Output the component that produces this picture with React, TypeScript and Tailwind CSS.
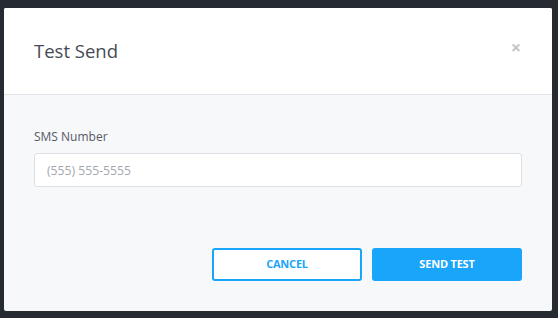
import { useState } from 'react';

export default function App() {
    const [numero, setNumero] = useState('');

    return (
        <div className="h-[318px] w-[558px] bg-[#262a31] pt-2 pl-1 font-['Open_Sans',sans-serif]">
            <div className="w-[548px] h-[303px] flex flex-col overflow-hidden rounded-[2px] bg-[#f7f8fa]">
                {/* Cabecera */}
                <div className="h-[87px] shrink-0 flex items-center justify-between bg-white border-b border-[#e2e3e8] pl-[30px] pr-[30px]">
                    <h2 className="text-[18.5px] leading-none text-[#464b55]">Test Send</h2>
                    <button className="text-[#c4c6ca] text-[18px] leading-none font-bold -mt-[8px] mr-[1px]">×</button>
                </div>

                {/* Cuerpo */}
                <div className="flex-1 flex flex-col px-[30px] pt-[33px] pb-[30px]">
                    <label className="block text-[12px] leading-[18px] text-[#555a64] mb-[7px]">SMS Number</label>
                    <input
                        className="h-[34px] w-full rounded-[3px] border border-[#dfe0e5] bg-white px-[12px] text-[12.2px] text-[#555a64] placeholder:text-[#a3a7ae] outline-none"
                        placeholder="(555) 555-5555"
                        value={numero}
                        onChange={e => setNumero(e.target.value)}
                    />
                    <div className="mt-auto flex justify-end gap-[10px]">
                        <button className="w-[150px] h-[33px] rounded-[3px] border-2 border-[#19a5f9] bg-white text-[11px] font-bold tracking-[-0.2px] text-[#19a5f9]">
                            CANCEL
                        </button>
                        <button className="w-[150px] h-[33px] rounded-[3px] bg-[#19a5f9] text-[11px] font-bold tracking-[-0.2px] text-white">
                            SEND TEST
                        </button>
                    </div>
                </div>
            </div>
        </div>
    );
}
